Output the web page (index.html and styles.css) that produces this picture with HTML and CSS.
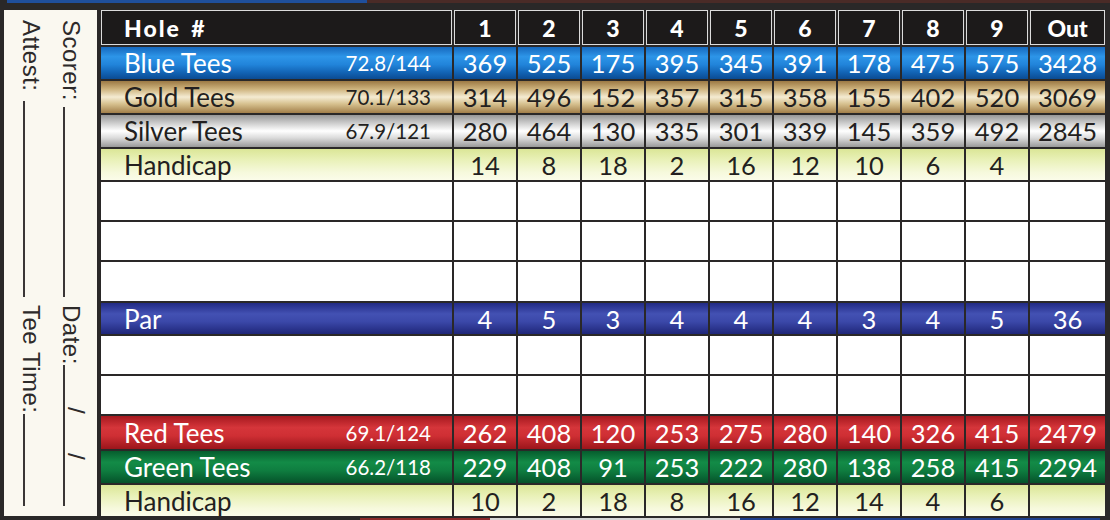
FILE: index.html
```html
<!DOCTYPE html>
<html lang="en">
<head>
<meta charset="utf-8">
<title>Scorecard</title>
<link rel="stylesheet" href="styles.css">
</head>
<body>
<div class="card">
  <aside class="sign">
    <div class="sig">
      <div class="half first"><span class="lbl gap">Scorer:</span><span class="rule"></span></div>
      <div class="half"><span class="lbl">Date:</span><span class="rule seg1"></span><span class="slash"><i>/</i></span><span class="rule seg2"></span><span class="slash"><i>/</i></span><span class="rule"></span></div>
    </div>
    <div class="sig">
      <div class="half first"><span class="lbl gap2">Attest:</span><span class="rule"></span></div>
      <div class="half"><span class="lbl">Tee Time:</span><span class="rule"></span></div>
    </div>
  </aside>

  <div class="score">
    <div class="row head">
      <div class="c name">Hole #</div>
      <div class="c">1</div><div class="c">2</div><div class="c">3</div><div class="c">4</div><div class="c">5</div><div class="c">6</div><div class="c">7</div><div class="c">8</div><div class="c">9</div>
      <div class="c">Out</div>
    </div>
    <div class="row blue">
      <div class="c name"><span>Blue Tees</span><span class="rating">72.8/144</span></div>
      <div class="c">369</div><div class="c">525</div><div class="c">175</div><div class="c">395</div><div class="c">345</div><div class="c">391</div><div class="c">178</div><div class="c">475</div><div class="c">575</div>
      <div class="c">3428</div>
    </div>
    <div class="row gold">
      <div class="c name"><span>Gold Tees</span><span class="rating">70.1/133</span></div>
      <div class="c">314</div><div class="c">496</div><div class="c">152</div><div class="c">357</div><div class="c">315</div><div class="c">358</div><div class="c">155</div><div class="c">402</div><div class="c">520</div>
      <div class="c">3069</div>
    </div>
    <div class="row silver">
      <div class="c name"><span>Silver Tees</span><span class="rating">67.9/121</span></div>
      <div class="c">280</div><div class="c">464</div><div class="c">130</div><div class="c">335</div><div class="c">301</div><div class="c">339</div><div class="c">145</div><div class="c">359</div><div class="c">492</div>
      <div class="c">2845</div>
    </div>
    <div class="row hcp">
      <div class="c name"><span>Handicap</span></div>
      <div class="c">14</div><div class="c">8</div><div class="c">18</div><div class="c">2</div><div class="c">16</div><div class="c">12</div><div class="c">10</div><div class="c">6</div><div class="c">4</div>
      <div class="c"></div>
    </div>
    <div class="row blank">
      <div class="c name"></div><div class="c"></div><div class="c"></div><div class="c"></div><div class="c"></div><div class="c"></div><div class="c"></div><div class="c"></div><div class="c"></div><div class="c"></div><div class="c"></div>
    </div>
    <div class="row blank">
      <div class="c name"></div><div class="c"></div><div class="c"></div><div class="c"></div><div class="c"></div><div class="c"></div><div class="c"></div><div class="c"></div><div class="c"></div><div class="c"></div><div class="c"></div>
    </div>
    <div class="row blank">
      <div class="c name"></div><div class="c"></div><div class="c"></div><div class="c"></div><div class="c"></div><div class="c"></div><div class="c"></div><div class="c"></div><div class="c"></div><div class="c"></div><div class="c"></div>
    </div>
    <div class="row par">
      <div class="c name"><span>Par</span></div>
      <div class="c">4</div><div class="c">5</div><div class="c">3</div><div class="c">4</div><div class="c">4</div><div class="c">4</div><div class="c">3</div><div class="c">4</div><div class="c">5</div>
      <div class="c">36</div>
    </div>
    <div class="row blank">
      <div class="c name"></div><div class="c"></div><div class="c"></div><div class="c"></div><div class="c"></div><div class="c"></div><div class="c"></div><div class="c"></div><div class="c"></div><div class="c"></div><div class="c"></div>
    </div>
    <div class="row blank">
      <div class="c name"></div><div class="c"></div><div class="c"></div><div class="c"></div><div class="c"></div><div class="c"></div><div class="c"></div><div class="c"></div><div class="c"></div><div class="c"></div><div class="c"></div>
    </div>
    <div class="row red">
      <div class="c name"><span>Red Tees</span><span class="rating">69.1/124</span></div>
      <div class="c">262</div><div class="c">408</div><div class="c">120</div><div class="c">253</div><div class="c">275</div><div class="c">280</div><div class="c">140</div><div class="c">326</div><div class="c">415</div>
      <div class="c">2479</div>
    </div>
    <div class="row green">
      <div class="c name"><span>Green Tees</span><span class="rating">66.2/118</span></div>
      <div class="c">229</div><div class="c">408</div><div class="c">91</div><div class="c">253</div><div class="c">222</div><div class="c">280</div><div class="c">138</div><div class="c">258</div><div class="c">415</div>
      <div class="c">2294</div>
    </div>
    <div class="row hcp">
      <div class="c name"><span>Handicap</span></div>
      <div class="c">10</div><div class="c">2</div><div class="c">18</div><div class="c">8</div><div class="c">16</div><div class="c">12</div><div class="c">14</div><div class="c">4</div><div class="c">6</div>
      <div class="c"></div>
    </div>
  </div>
</div>
</body>
</html>
```

FILE: styles.css
```css
html, body {
  margin: 0;
  padding: 0;
}

body {
  width: 1110px;
  height: 520px;
  overflow: hidden;
  background:
    linear-gradient(90deg, transparent 7px, #1f4f9c 7px, #1f4f9c 367px, #4a2b27 367px) top left / 100% 3px no-repeat,
    linear-gradient(90deg, #2a2828 360px, #8c2a2a 360px, #8c2a2a 490px, #d6d6d6 490px, #d6d6d6 740px, #1e3f8c 740px, #1e3f8c 1100px, #2a2828 1100px) bottom left / 100% 2px no-repeat,
    #2a2828;
}

.card {
  box-sizing: border-box;
  width: 1110px;
  height: 520px;
  padding: 10px 5px 4px 4px;
  display: flex;
  gap: 4px;
}

/* ---------- signature panel ---------- */
.sign {
  box-sizing: border-box;
  width: 93px;
  height: 506px;
  background: #faf8f0;
  writing-mode: vertical-rl;
  padding: 10px 6px 10px 0;
  color: #2d2a2a;
  font-family: "Liberation Sans", Arial, sans-serif;
  font-size: 24px;
}

.sig {
  display: flex;
  width: 40px;
  height: 486px;
}

.half {
  display: flex;
  align-items: stretch;
  flex: 1;
}

.half.first {
  flex: 0 0 277px;
  margin-bottom: 8px;
}

.lbl {
  line-height: 40px;
  white-space: nowrap;
  letter-spacing: 0.5px;
}

.lbl.gap {
  margin-bottom: 6px;
}

.lbl.gap2 {
  margin-bottom: 9px;
}

.rule {
  flex: 1;
  background: linear-gradient(to right, transparent 12px, #3a3636 12px, #3a3636 14px, transparent 14px);
}

.rule.seg1 {
  flex: 0 0 42px;
}

.rule.seg2 {
  flex: 0 0 39px;
}

.slash {
  line-height: 40px;
  background: linear-gradient(to right, transparent 12px, #3a3636 12px, #3a3636 14px, transparent 14px);
}

.slash i {
  font-style: normal;
  display: inline-block;
  transform: translateX(5px);
}

/* ---------- score grid ---------- */
.score {
  display: grid;
  grid-template-columns: 351px repeat(9, 62px) 75px;
  grid-template-rows: 35px 32px 32px 32px 31px 38px 38px 39px 31px 38px 38px 33px 32px 31px;
  gap: 2px;
  width: 1004px;
  height: 506px;
  background: #2a2828;
}

.row {
  display: contents;
}

.c {
  display: flex;
  align-items: center;
  justify-content: center;
  font-family: Lato, "Noto Sans", sans-serif;
  font-size: 25.5px;
  color: #231f20;
  white-space: nowrap;
}

.c.name {
  justify-content: space-between;
  padding: 0 21px 0 23px;
  font-size: 26px;
}

.rating {
  font-size: 20.5px;
}

.head .c {
  background: #1c1a1a;
  color: #fff;
  font-weight: 900;
  font-size: 23px;
  box-shadow: inset 0 0 0 1px #dcdcdc;
}

.head .c.name {
  font-size: 23px;
  letter-spacing: 2px;
  word-spacing: 3px;
}

.blue .c {
  color: #fff;
  background: linear-gradient(180deg, #1668bd 0%, #2d95e8 30%, #2184da 55%, #1263b4 80%, #0b4b92 100%);
}

.gold .c {
  background: linear-gradient(180deg, #9c7944 0%, #cdb27c 25%, #f4ebd2 50%, #d6c08e 72%, #a27f4a 100%);
}

.silver .c {
  background: linear-gradient(180deg, #979797 0%, #d2d2d2 28%, #ffffff 50%, #dadada 72%, #999999 100%);
}

.hcp .c {
  background: linear-gradient(180deg, #dbe697 0%, #e9f1b8 35%, #f6f9dc 75%, #fbfce9 100%);
}

.blank .c {
  background: #ffffff;
}

.par .c {
  color: #fff;
  background: linear-gradient(180deg, #222a84 0%, #4351b3 35%, #3b48a9 60%, #1f2679 100%);
}

.red .c {
  color: #fff;
  background: linear-gradient(180deg, #a6191f 0%, #d5353a 35%, #cf2f34 60%, #9b151b 100%);
}

.green .c {
  color: #fff;
  background: linear-gradient(180deg, #065c2d 0%, #138b47 35%, #0f7e40 60%, #05522a 100%);
}
```
